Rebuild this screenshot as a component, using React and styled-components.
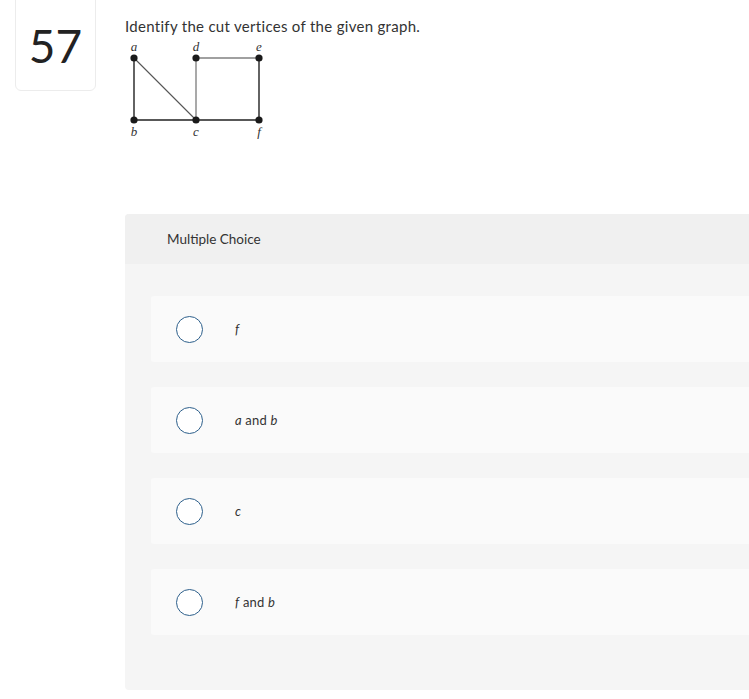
import styled, { createGlobalStyle } from "styled-components";

const GlobalStyle = createGlobalStyle`
    html, body {
        margin: 0;
        padding: 0;
        background: #fff;
        overflow: hidden;
    }
    body {
        font-family: Lato, "Open Sans", sans-serif;
        color: #333;
    }
`;

const choices = [
    { id: 1, label: <><i>f</i></> },
    { id: 2, label: <><i>a</i> and <i>b</i></> },
    { id: 3, label: <><i>c</i></> },
    { id: 4, label: <><i>f</i> and <i>b</i></> },
];

const Graph = () => (
    <svg width="160" height="104" viewBox="0 0 160 104">
        <g strokeLinecap="round">
            <line x1="14" y1="20" x2="14" y2="82" stroke="#222" strokeWidth="1.4" />
            <line x1="14" y1="82" x2="139" y2="82" stroke="#222" strokeWidth="1.4" />
            <line x1="139" y1="82" x2="139" y2="20" stroke="#222" strokeWidth="1.4" />
            <line x1="14" y1="20" x2="76" y2="82" stroke="#555" strokeWidth="1.1" />
            <line x1="76" y1="20" x2="76" y2="82" stroke="#a0a0a0" strokeWidth="1.8" />
            <line x1="76" y1="20" x2="139" y2="20" stroke="#a0a0a0" strokeWidth="1.8" />
        </g>
        {[[14, 20], [76, 20], [139, 20], [14, 82], [76, 82], [139, 82]].map(([x, y]) => (
            <circle key={`${x}-${y}`} cx={x} cy={y} r="3.6" fill="#1a1a1a" />
        ))}
        <g fontFamily="'Liberation Serif', serif" fontStyle="italic" fontSize="13" fill="#333" textAnchor="middle">
            <text x="14" y="12.5">a</text>
            <text x="76" y="12.5">d</text>
            <text x="139" y="12.5">e</text>
            <text x="14" y="97.5">b</text>
            <text x="76" y="97.5">c</text>
            <text x="139" y="97.5">f</text>
        </g>
    </svg>
);

const App = () => {
    return (
        <>
            <GlobalStyle />
            <Page>
                <NumberBox>57</NumberBox>
                <Content>
                    <Question>Identify the cut vertices of the given graph.</Question>
                    <Figure>
                        <Graph />
                    </Figure>
                    <Panel>
                        <PanelHeader>Multiple Choice</PanelHeader>
                        <Choices>
                            {choices.map(c => (
                                <Choice key={c.id}>
                                    <Radio />
                                    <ChoiceText>{c.label}</ChoiceText>
                                </Choice>
                            ))}
                        </Choices>
                    </Panel>
                </Content>
            </Page>
        </>
    );
};

export default App;

const Page = styled.div`
    display: flex;
    align-items: flex-start;
    padding-left: 15px;
    width: 749px;
    height: 699px;
    box-sizing: border-box;
`;

const NumberBox = styled.div`
    flex: none;
    width: 81px;
    height: 101px;
    margin-top: -10px;
    margin-right: 29px;
    box-sizing: border-box;
    border: 1px solid #ececec;
    border-radius: 6px;
    display: flex;
    align-items: center;
    justify-content: center;
    padding-top: 10px;
    font-family: Lato, sans-serif;
    font-size: 46px;
    color: #222;
    line-height: 1;
`;

const Content = styled.div`
    flex: 1;
    min-width: 0;
    display: flex;
    flex-direction: column;
`;

const Question = styled.div`
    margin-top: 16px;
    font-size: 15px;
    line-height: 20px;
    letter-spacing: 0.3px;
    color: #333;
`;

const Figure = styled.div`
    margin-top: 2px;
    margin-left: -5px;
    height: 100px;
`;

const Panel = styled.div`
    margin-top: 76px;
    width: 640px;
    background: #f5f5f5;
    border-radius: 4px;
    overflow: hidden;
`;

const PanelHeader = styled.div`
    height: 50px;
    background: #f0f0f0;
    padding-left: 42px;
    display: flex;
    align-items: center;
    font-size: 13.5px;
    color: #333;
`;

const Choices = styled.div`
    display: flex;
    flex-direction: column;
    gap: 25px;
    padding: 32px 0 55px 26px;
`;

const Choice = styled.div`
    height: 66px;
    background: #fafafa;
    border-radius: 3px;
    display: flex;
    align-items: center;
    padding-left: 25px;
`;

const Radio = styled.span`
    flex: none;
    width: 27px;
    height: 27px;
    box-sizing: border-box;
    border: 1.5px solid #2d5f8b;
    border-radius: 50%;
    background: #fff;
`;

const ChoiceText = styled.span`
    margin-left: 32px;
    font-size: 13px;
    letter-spacing: 0.2px;
    color: #333;
`;
